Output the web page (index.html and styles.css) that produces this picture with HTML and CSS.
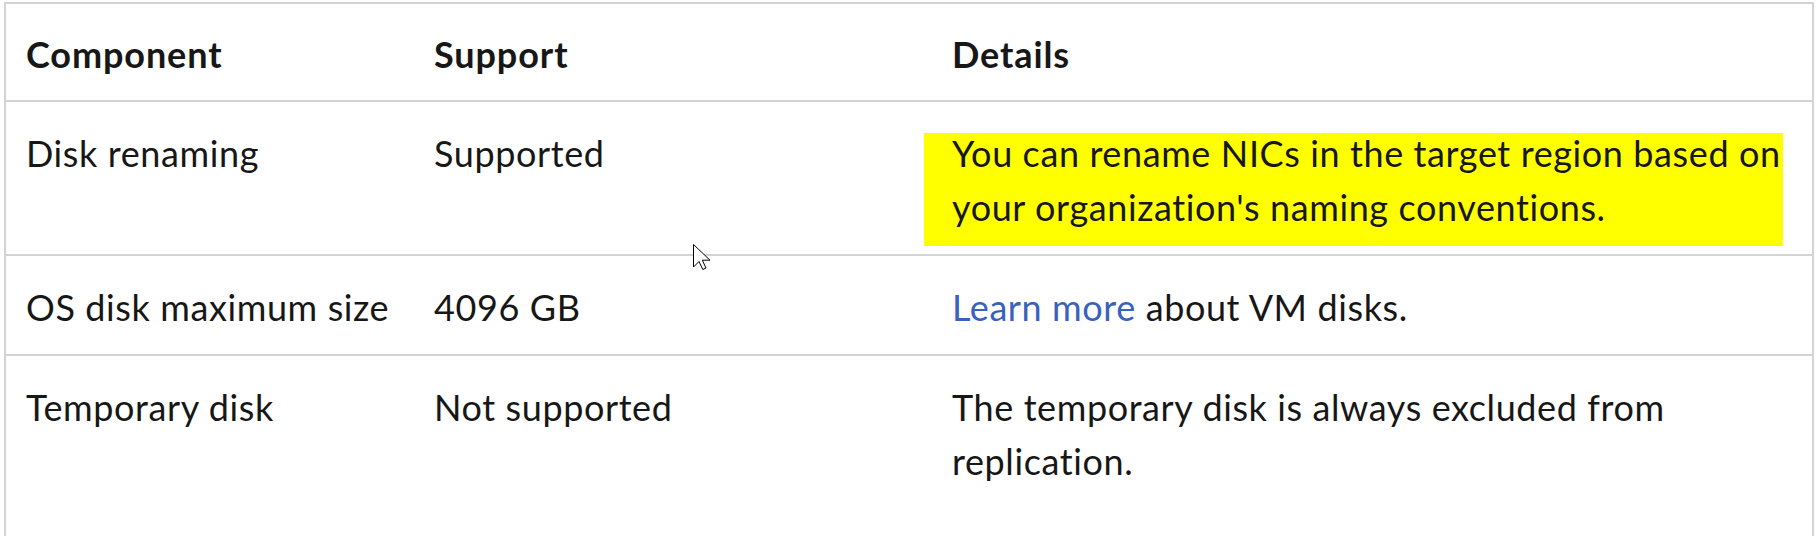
FILE: index.html
```html
<!DOCTYPE html>
<html lang="en">
<head>
<meta charset="utf-8">
<title>Disk support</title>
<link rel="stylesheet" href="styles.css">
</head>
<body>
<div class="page">
  <table class="support">
    <colgroup>
      <col class="c1">
      <col class="c2">
      <col class="c3">
    </colgroup>
    <thead>
      <tr>
        <th>Component</th>
        <th>Support</th>
        <th>Details</th>
      </tr>
    </thead>
    <tbody>
      <tr>
        <td>Disk renaming</td>
        <td>Supported</td>
        <td><p class="hl">You can rename NICs in the target region based on your organization's naming conventions.</p></td>
      </tr>
      <tr>
        <td>OS disk maximum size</td>
        <td>4096 GB</td>
        <td><a href="#" class="link">Learn more</a> about VM disks.</td>
      </tr>
      <tr class="last">
        <td>Temporary disk</td>
        <td>Not supported</td>
        <td>The temporary disk is always excluded from replication.</td>
      </tr>
    </tbody>
  </table>
  <svg class="cursor" width="20" height="28" viewBox="0 0 20 28" aria-hidden="true">
    <path d="M1.5 1.5 L1.5 24 L7 18.5 L10.8 26.5 L14 25 L10.3 17.2 L18 17.2 Z" fill="#fff" stroke="#000" stroke-width="1" stroke-linejoin="miter"/>
  </svg>
</div>
</body>
</html>
```

FILE: styles.css
```css
html {
  background: #fff;
}
body {
  margin: 0;
  font-family: "Lato", "Noto Sans", sans-serif;
  color: #171717;
  overflow: hidden;
}
.page {
  position: relative;
  padding: 2px 5px 0 4px;
}
.support {
  width: 100%;
  table-layout: fixed;
  border-collapse: separate;
  border-spacing: 0;
  border: 2px solid #d3d3d3;
  border-bottom: none;
  font-size: 36px;
  line-height: 54px;
  letter-spacing: 0.6px;
}
.c1 { width: 408px; }
.c2 { width: 518px; }
.support th,
.support td {
  text-align: left;
  vertical-align: top;
  padding: 24px 20px 20px 20px;
  border-bottom: 2px solid #d3d3d3;
}
.support th {
  font-weight: 700;
  letter-spacing: 0.9px;
  padding-top: 23px;
  padding-bottom: 19px;
}
.support tr.last td {
  border-bottom: none;
  padding-bottom: 60px;
}
.hl {
  position: relative;
  margin: 0;
}
.hl::before {
  content: "";
  position: absolute;
  left: -28px;
  right: 9px;
  top: 7px;
  bottom: -12px;
  background: #ffff00;
  z-index: -1;
}
.link {
  color: #3862bd;
  text-decoration: none;
}
.cursor {
  position: absolute;
  left: 692px;
  top: 243px;
}
```
